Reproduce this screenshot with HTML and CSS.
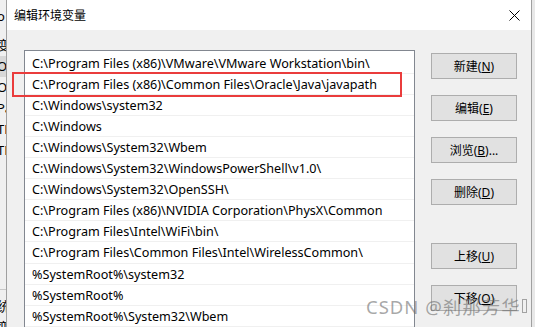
FILE: index.html
```html
<html>
<head>
    <title>编辑环境变量</title>
    <link rel="stylesheet" href="styles.css">
</head>
<body>
    <div class="screen">
        <div class="behind-left">
            <span class="peek top">o</span>
            <span class="peek">变</span>
            <span class="peek sel">Or</span>
            <span class="peek">Or</span>
            <span class="peek">Pa</span>
            <span class="peek">TE</span>
            <span class="peek">TM</span>
            <span class="peek gap">统</span>
            <span class="peek">变</span>
        </div>
        <div class="dialog">
            <div class="titlebar">
                <span class="title">编辑环境变量</span>
                <svg class="close" width="11" height="11" viewBox="0 0 11 11">
                    <path d="M0.5 0.5 L10.5 10.5 M10.5 0.5 L0.5 10.5" stroke="#000" stroke-width="1"/>
                </svg>
            </div>
            <div class="content">
                <ul class="pathlist">
                    <li>C:\Program Files (x86)\VMware\VMware Workstation\bin\</li>
                    <li>C:\Program Files (x86)\Common Files\Oracle\Java\javapath</li>
                    <li>C:\Windows\system32</li>
                    <li>C:\Windows</li>
                    <li>C:\Windows\System32\Wbem</li>
                    <li>C:\Windows\System32\WindowsPowerShell\v1.0\</li>
                    <li>C:\Windows\System32\OpenSSH\</li>
                    <li>C:\Program Files (x86)\NVIDIA Corporation\PhysX\Common</li>
                    <li>C:\Program Files\Intel\WiFi\bin\</li>
                    <li>C:\Program Files\Common Files\Intel\WirelessCommon\</li>
                    <li>%SystemRoot%\system32</li>
                    <li>%SystemRoot%</li>
                    <li>%SystemRoot%\System32\Wbem</li>
                </ul>
                <div class="buttons">
                    <button>新建(<u>N</u>)</button>
                    <button>编辑(<u>E</u>)</button>
                    <button>浏览(<u>B</u>)...</button>
                    <button>删除(<u>D</u>)</button>
                    <button class="spaced">上移(<u>U</u>)</button>
                    <button>下移(<u>O</u>)</button>
                </div>
            </div>
        </div>
        <div class="behind-right"></div>
    </div>
    <div class="highlight"></div>
    <div class="watermark">CSDN @刹那芳华<span class="tofu"></span></div>
</body>
</html>
```

FILE: styles.css
```css
body {
    margin: 0;
    font-family: "Noto Sans", "Noto Sans CJK SC", sans-serif;
    font-size: 12px;
    color: #000;
    overflow: hidden;
}
.screen {
    display: flex;
    width: 535px;
    height: 327px;
    overflow: hidden;
}
.behind-left {
    width: 6px;
    border-right: 1px solid #a0a0a0;
    background: #f0f0f0;
    display: flex;
    flex-direction: column;
    overflow: hidden;
    white-space: nowrap;
    font-size: 13px;
    line-height: 21px;
}
.peek {
    margin-left: -3px;
}
.peek.top {
    margin-top: 6px;
    margin-bottom: 8px;
}
.peek.sel {
    background: #d8d8d8;
}
.peek.gap {
    margin-top: 128px;
    border-top: 1px solid #c8c8c8;
    padding-top: 6px;
}
.dialog {
    flex: 1;
    display: flex;
    flex-direction: column;
}
.titlebar {
    height: 30px;
    background: #fff;
    display: flex;
    align-items: center;
    justify-content: space-between;
    padding: 0 11px 0 7px;
    flex-shrink: 0;
}
.title {
    font-size: 12px;
}
.content {
    flex: 1;
    background: #f0f0f0;
    display: flex;
    align-items: flex-start;
    padding: 20px 0 0 17px;
}
.pathlist {
    list-style: none;
    margin: 0;
    padding: 2px 0 0 0;
    width: 389px;
    height: 300px;
    background: #fff;
    border: 1px solid #828790;
    border-bottom: none;
    font-size: 12.6px;
}
.pathlist li {
    height: 20px;
    line-height: 21px;
    padding-left: 7px;
    border-bottom: 1px solid #f0f0f0;
    white-space: nowrap;
    overflow: hidden;
}
.pathlist li:nth-child(n+8) {
    height: 20.2px;
}
.buttons {
    margin-left: 16px;
    margin-top: 3px;
    display: flex;
    flex-direction: column;
    gap: 16px;
}
.buttons button {
    width: 86px;
    height: 26px;
    background: #e1e1e1;
    border: 1px solid #adadad;
    font-family: "Noto Sans", "Noto Sans CJK SC", sans-serif;
    font-size: 12px;
    color: #000;
    padding: 0;
}
.buttons button.spaced {
    margin-top: 22px;
}
.behind-right {
    width: 3px;
    border-left: 1px solid #a0a0a0;
    background: #e8e8e8;
}
.highlight {
    position: absolute;
    left: 12px;
    top: 72px;
    width: 386px;
    height: 21px;
    border: 2px solid #ea3c3c;
}
.watermark {
    position: absolute;
    left: 366px;
    top: 293px;
    font-size: 18.5px;
    color: rgba(110, 110, 110, 0.6);
    letter-spacing: 1px;
    white-space: nowrap;
    display: flex;
    align-items: center;
}
.tofu {
    display: inline-block;
    width: 3px;
    height: 12px;
    margin-left: 1px;
    border: 1px solid rgba(110, 110, 110, 0.6);
}
```
